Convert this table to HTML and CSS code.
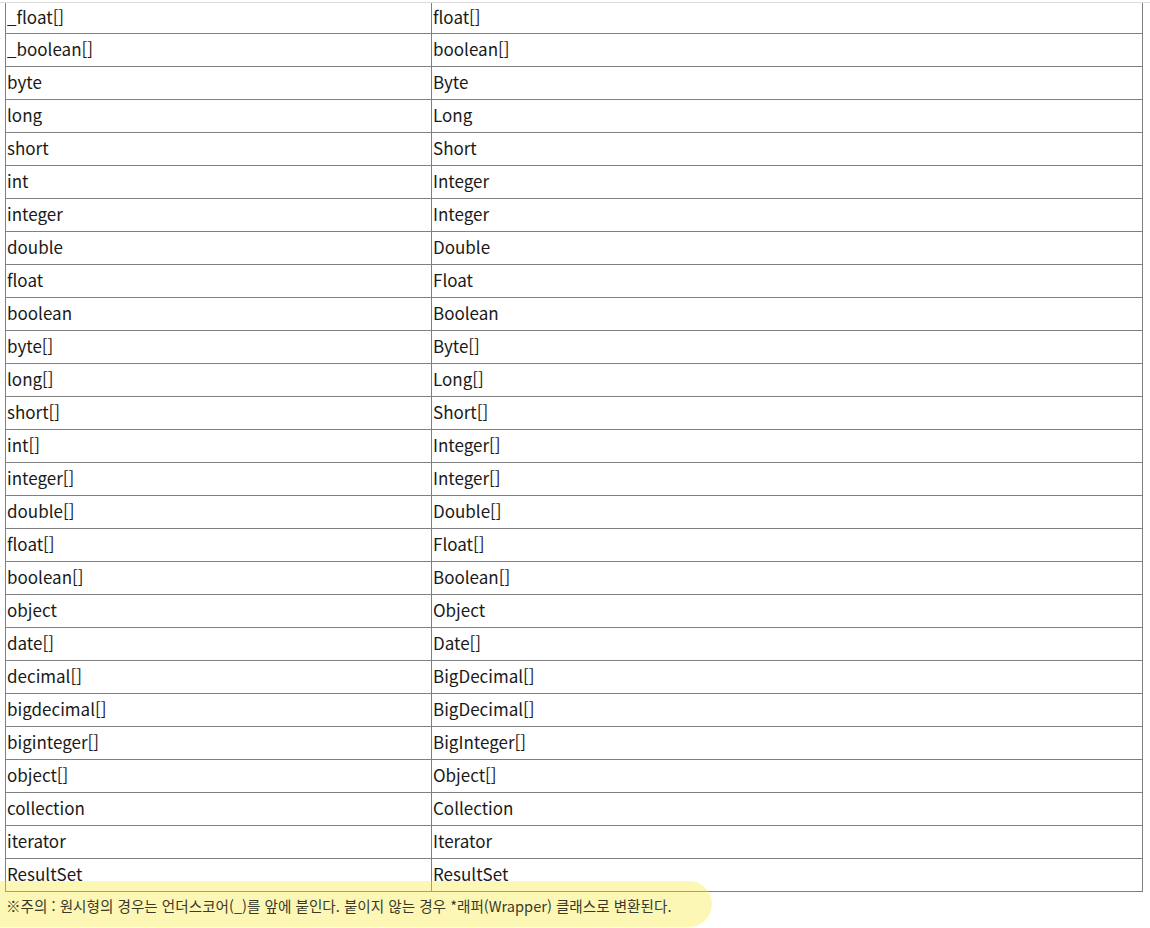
FILE: index.html
```html
<!DOCTYPE html>
<html lang="ko">
<head>
<meta charset="utf-8">
<link rel="stylesheet" href="styles.css">
</head>
<body>
<div class="topline"></div>
<table class="types">
<tbody>
<tr><td>_float[]</td><td>float[]</td></tr>
<tr><td>_boolean[]</td><td>boolean[]</td></tr>
<tr><td>byte</td><td>Byte</td></tr>
<tr><td>long</td><td>Long</td></tr>
<tr><td>short</td><td>Short</td></tr>
<tr><td>int</td><td>Integer</td></tr>
<tr><td>integer</td><td>Integer</td></tr>
<tr><td>double</td><td>Double</td></tr>
<tr><td>float</td><td>Float</td></tr>
<tr><td>boolean</td><td>Boolean</td></tr>
<tr><td>byte[]</td><td>Byte[]</td></tr>
<tr><td>long[]</td><td>Long[]</td></tr>
<tr><td>short[]</td><td>Short[]</td></tr>
<tr><td>int[]</td><td>Integer[]</td></tr>
<tr><td>integer[]</td><td>Integer[]</td></tr>
<tr><td>double[]</td><td>Double[]</td></tr>
<tr><td>float[]</td><td>Float[]</td></tr>
<tr><td>boolean[]</td><td>Boolean[]</td></tr>
<tr><td>object</td><td>Object</td></tr>
<tr><td>date[]</td><td>Date[]</td></tr>
<tr><td>decimal[]</td><td>BigDecimal[]</td></tr>
<tr><td>bigdecimal[]</td><td>BigDecimal[]</td></tr>
<tr><td>biginteger[]</td><td>BigInteger[]</td></tr>
<tr><td>object[]</td><td>Object[]</td></tr>
<tr><td>collection</td><td>Collection</td></tr>
<tr><td>iterator</td><td>Iterator</td></tr>
<tr><td>ResultSet</td><td>ResultSet</td></tr>
</tbody>
</table>
<p class="note"><span class="mark"></span><span class="note-text">※주의 : 원시형의 경우는 언더스코어(_)를 앞에 붙인다. 붙이지 않는 경우 *래퍼(Wrapper) 클래스로 변환된다.</span></p>
</body>
</html>
```
FILE: styles.css
```css
html, body {
  margin: 0;
  padding: 0;
  background: #fff;
}
body {
  font-family: "Noto Sans CJK KR", "Noto Sans", sans-serif;
  color: #1a1a1a;
  width: 1150px;
}
.topline {
  height: 2px;
  border-bottom: 1px solid #dcdcdc;
}
.types {
  border-collapse: collapse;
  margin-left: 5px;
  width: 1138px;
  table-layout: fixed;
  font-size: 17px;
}
.types td {
  border: 1px solid #808080;
  border-top: none;
  height: 32px;
  padding: 0 0 2px 1px;
  box-sizing: border-box;
  vertical-align: middle;
  line-height: 30px;
  white-space: nowrap;
}
.types td:first-child {
  width: 426px;
}
.types tr:first-child td {
  height: 30px;
  line-height: 28px;
}
.note {
  position: relative;
  margin: 0;
  padding: 2px 0 12px 6px;
  font-size: 14.6px;
  color: #3a3a2a;
  line-height: 24px;
}
.mark {
  position: absolute;
  left: -10px;
  top: -11px;
  width: 722px;
  height: 46px;
  border-radius: 6px 23px 23px 14px;
  background: rgba(250, 232, 40, 0.34);
}
.note-text {
  position: relative;
}
```
